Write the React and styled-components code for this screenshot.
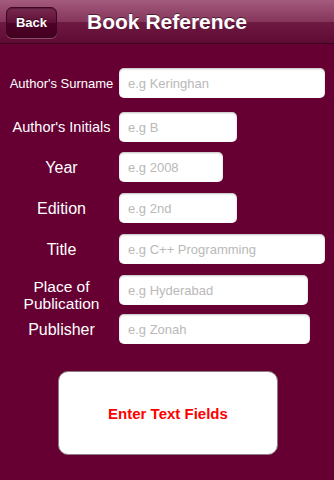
import React from "react";
import styled, { createGlobalStyle } from "styled-components";

const GlobalStyle = createGlobalStyle`
  html, body {
    margin: 0;
    padding: 0;
    background: #660033;
    font-family: "Liberation Sans", Arial, sans-serif;
  }
`;

const Screen = styled.div`
  width: 334px;
  height: 480px;
  background: #660033;
  overflow: hidden;
`;

const NavBar = styled.div`
  position: relative;
  height: 44px;
  display: flex;
  align-items: center;
  justify-content: center;
  background: linear-gradient(#a35b7d 0%, #86355b 50%, #6d1a42 52%, #5f0a34 100%);
  border-bottom: 1px solid #3a0019;
  box-sizing: border-box;
`;

const BackButton = styled.button`
  position: absolute;
  left: 6px;
  top: 7px;
  width: 51px;
  height: 31px;
  border-radius: 6px;
  border: 1px solid #3e0520;
  background: linear-gradient(#7a2a50 0%, #5e1037 50%, #4e0029 52%, #44001f 100%);
  box-shadow: 0 1px 0 rgba(255, 255, 255, 0.25), inset 0 1px 1px rgba(0, 0, 0, 0.3);
  color: #fff;
  font-family: "Liberation Sans", Arial, sans-serif;
  font-weight: bold;
  font-size: 13px;
  padding: 0;
  text-shadow: 0 -1px 0 rgba(0, 0, 0, 0.5);
`;

const Title = styled.h1`
  margin: 0;
  color: #fff;
  font-size: 21px;
  font-weight: bold;
  text-shadow: 0 -1px 0 rgba(0, 0, 0, 0.5);
`;

const Form = styled.div`
  display: flex;
  flex-direction: column;
  padding-top: 24px;
`;

const Row = styled.div`
  display: grid;
  grid-template-columns: 119px 1fr;
  grid-template-rows: 30px;
  align-items: center;
  margin-top: ${(p) => p.$gap}px;
`;

const Label = styled.label`
  color: #fff;
  text-align: center;
  font-size: ${(p) => p.$size}px;
  line-height: 17px;
  padding-left: 4px;
  transform: translateY(${(p) => p.$shift || 0}px);
`;

const Input = styled.input`
  width: ${(p) => p.$width}px;
  height: 30px;
  box-sizing: border-box;
  border: none;
  border-radius: 5px;
  background: #fff;
  padding: 0 9px;
  font-family: "Liberation Sans", Arial, sans-serif;
  font-size: 13px;
  box-shadow: inset 0 1px 2px rgba(0, 0, 0, 0.25);
  outline: none;
  &::placeholder {
    color: #b9b9b9;
  }
`;

const Submit = styled.button`
  margin: 27px 0 0 58px;
  width: 220px;
  height: 84px;
  border-radius: 10px;
  border: 1px solid #8c7d85;
  background: #fff;
  color: #ff0000;
  font-family: "Liberation Sans", Arial, sans-serif;
  font-weight: bold;
  font-size: 15px;
`;

const fields = [
  { label: "Author's Surname", hint: "e.g Keringhan", width: 206, gap: 0, size: 13 },
  { label: "Author's Initials", hint: "e.g B", width: 118, gap: 14, size: 14.5 },
  { label: "Year", hint: "e.g 2008", width: 104, gap: 10, size: 16 },
  { label: "Edition", hint: "e.g 2nd", width: 118, gap: 11, size: 16 },
  { label: "Title", hint: "e.g C++ Programming", width: 206, gap: 11, size: 16 },
  { label: "Place of Publication", hint: "e.g Hyderabad", width: 189, gap: 11, size: 15.5, shift: 5 },
  { label: "Publisher", hint: "e.g Zonah", width: 191, gap: 9, size: 16 },
];

export default function App() {
  return (
    <Screen>
      <GlobalStyle />
      <NavBar>
        <BackButton>Back</BackButton>
        <Title>Book Reference</Title>
      </NavBar>
      <Form>
        {fields.map((f) => (
          <Row key={f.label} $gap={f.gap}>
            <Label $size={f.size} $shift={f.shift}>
              {f.label === "Place of Publication" ? (
                <>
                  Place of
                  <br />
                  Publication
                </>
              ) : (
                f.label
              )}
            </Label>
            <Input $width={f.width} placeholder={f.hint} />
          </Row>
        ))}
        <Submit>Enter Text Fields</Submit>
      </Form>
    </Screen>
  );
}
